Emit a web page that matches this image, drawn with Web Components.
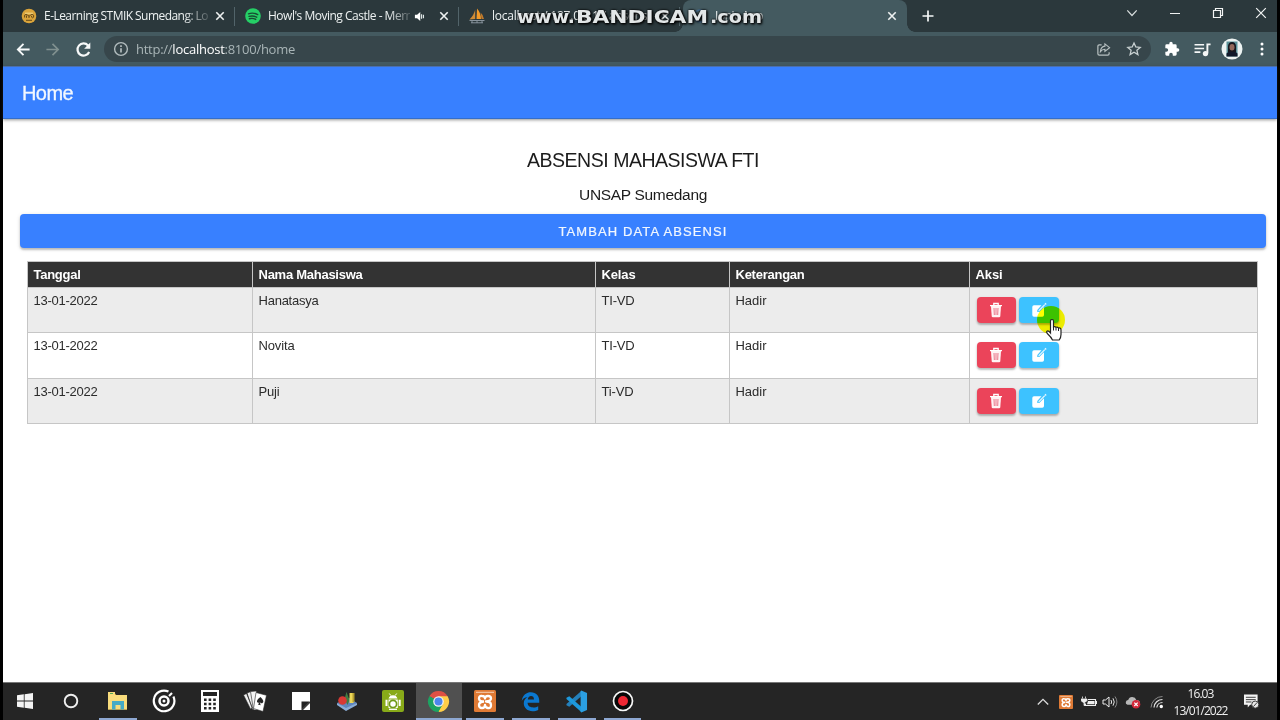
<!DOCTYPE html>
<html lang="id">
<head>
<meta charset="utf-8">
<title>Home</title>
<style>
html,body{margin:0;height:100%;background:#000;overflow:hidden}
</style>
</head>
<body>
<desk-screen></desk-screen>
<script>
const define = (name, css, html, ready) => customElements.define(name, class extends HTMLElement {
  connectedCallback() {
    if (this.shadowRoot) return;
    const root = this.attachShadow({ mode: 'open' });
    root.innerHTML = '<style>:host,*{box-sizing:border-box}' + css + '</style>' + (typeof html === 'function' ? html(this) : html);
    if (ready) ready(this, root);
  }
});

/* Glyph set: [viewBox, markup] */
const glyphs = {
  moodle: ['0 0 16 16', '<circle cx="8" cy="8" r="7.3" fill="#dba43a"/><path d="M3.6 9.5V7.2q1.5-1.8 3 0t3 0 3 0v2q-1 1.3-2 0V8M5.5 9.8V7.5M8 10V8M5 12.3h6" stroke="#65491a" stroke-width="1" fill="none"/><path d="M4 5.2h8" stroke="#f4d98a"/>'],
  spotify: ['0 0 16 16', '<circle cx="8" cy="8" r="7.8" fill="#25cf66"/><path d="M3.5 5.8c3-1 6.400-.7 9.200.8M4 8.400c2.600-.8 5.400-.5 7.700.8M4.400 10.700c2.200-.6 4.400-.4 6.300.7" stroke="#174d32" stroke-width="1.400" fill="none" stroke-linecap="round"/>'],
  pma: ['0 0 16 16', '<path d="M6.200 1.500v9.500L.5 11.500Q5 7 6.200 1.500" fill="#d08b35"/><path d="M8 .5Q12 5 12 11L7.500 11Z" fill="#f49a28"/><path d="M11.500 4.500Q14.500 7 15 11h-2.500Z" fill="#c07a2c"/><path d="M.5 12.500h15M2 14.800h12M3 12v3M8 12v3M13 12v3" stroke="#87929b" stroke-width="1"/>'],
  ionic: ['0 0 16 16', '<circle cx="8" cy="8" r="6" fill="none" stroke="#42698d" stroke-width="1.500"/><circle cx="8" cy="8" r="2.600" fill="#42698d"/>'],
  x: ['0 0 10 10', '<path d="M1.300 1.300l7.400 7.400M8.700 1.300L1.300 8.700" stroke="#eef1f1" stroke-width="1.600"/>'],
  sound: ['0 0 12 12', '<path d="M1 4.200h2.400L6.800 1v10L3.400 7.800H1z" fill="#fff"/><path d="M8.200 3.500v5M10.300 4v4" stroke="#dfe6e6" stroke-width="1.300"/>'],
  plus: ['0 0 12 12', '<path d="M6 .5v11M.5 6h11" stroke="#f5f7f7" stroke-width="1.700"/>'],
  chev: ['0 0 12 12', '<path d="M1.300 3.300L6 8.500l4.700-5.200" stroke="#d7dddd" stroke-width="1.200" fill="none"/>'],
  min: ['0 0 12 12', '<path d="M1 6.500h10" stroke="#eef1f1"/>'],
  restore: ['0 0 12 12', '<path d="M1.500 3.500h7v7h-7zM3.500 3V1.500h7v7H9" stroke="#f3f5f5" stroke-width="1.200" fill="none"/>'],
  close: ['0 0 12 12', '<path d="M1.200 1.200l9.600 9.600M10.800 1.200l-9.600 9.600" stroke="#f3f5f5" stroke-width="1.200"/>'],
  back: ['0 0 16 16', '<path d="M14.500 8H2.500M8 2L2 8l6 6" stroke="#f7f9f9" stroke-width="2" fill="none"/>'],
  fwd: ['0 0 16 16', '<path d="M1.500 8h12M8 2l6 6-6 6" stroke="#80908f" stroke-width="1.800" fill="none"/>'],
  reload: ['0 0 16 16', '<path d="M13.300 10.300A5.700 5.700 0 1 1 12.300 4.200" stroke="#f7f9f9" stroke-width="2.100" fill="none"/><path d="M14.400 1.300v6H8.600z" fill="#f7f9f9"/>'],
  info: ['0 0 16 16', '<circle cx="8" cy="8" r="6.400" stroke="#b2bcbe" stroke-width="1.400" fill="none"/><path d="M8 7.200v4.300M8 4.300v1.600" stroke="#c3cccd" stroke-width="1.500"/>'],
  share: ['0 0 16 16', '<path d="M6 3H3.500Q2 3 2 4.500v8Q2 14 3.500 14h9q1.500 0 1.500-1.500V11" stroke="#b7c0c1" stroke-width="1.300" fill="none"/><path d="M9.500 2l5 4-5 4V7.700Q6.500 7.700 4.700 10.200 5.200 4.900 9.500 4.400z" stroke="#b7c0c1" stroke-width="1.200" fill="none"/>'],
  star: ['0 0 16 16', '<path d="M8 2l1.800 4 4.400.4-3.300 2.900 1 4.300L8 11.300l-3.900 2.300 1-4.300L1.800 6.400 6.200 6z" stroke="#c8d0d1" stroke-width="1.300" fill="none"/>'],
  puzzle: ['0 0 24 24', '<path fill="#fff" d="M20.500 11H19V7a2 2 0 0 0-2-2h-4V3.500a2.500 2.500 0 0 0-5 0V5H4a2 2 0 0 0-2 2v3.800h1.500a2.700 2.700 0 0 1 0 5.400H2V20a2 2 0 0 0 2 2h3.800v-1.500a2.700 2.700 0 0 1 5.400 0V22H17a2 2 0 0 0 2-2v-4h1.500a2.500 2.500 0 0 0 0-5z"/>'],
  media: ['0 0 16 16', '<path d="M.5 3.500h9M.5 7h9M.5 10.500h5.500" stroke="#f5f7f7" stroke-width="1.500"/><path d="M12.600 11.500V3.200h3" stroke="#f5f7f7" stroke-width="1.800" fill="none"/><circle cx="10.800" cy="11.800" r="2.500" fill="#f5f7f7"/>'],
  avatar: ['0 0 22 22', '<circle cx="11" cy="11" r="10.500" fill="#edf3f2"/><path d="M5.500 3.500h11v15h-11z" fill="#5a9198"/><path d="M5.500 18.500v-3l3-2.500h5l3 2.500v3z" fill="#11182a"/><path d="M7 14V8q.5-4 4-4t4 4v6z" fill="#17171f"/><ellipse cx="11" cy="9.300" rx="2.500" ry="3.300" fill="#93685b"/>'],
  dots: ['0 0 4 14', '<circle cx="2" cy="2" r="1.500" fill="#fff"/><circle cx="2" cy="7" r="1.500" fill="#fff"/><circle cx="2" cy="12" r="1.500" fill="#fff"/>'],
  trash: ['0 0 16 16', '<path d="M2 3.700h12M5.800 3.500V1.500h4.400v2" stroke="#fff" stroke-width="1.300" fill="none"/><path d="M3 4h10l-.7 10.200q-.1 1.100-1.200 1.100H4.900q-1.100 0-1.200-1.100z" fill="#fff3f4"/><path d="M6 6l.3 7M8 6v7M10 6l-.3 7" stroke="#e7657b" stroke-width=".9"/>'],
  edit: ['0 0 16 16', '<path d="M3 3.300h7.500L6.300 8v2h2L13 5.200V13q0 1.700-1.700 1.700H3Q1.300 14.700 1.300 13V5Q1.300 3.300 3 3.300z" fill="#fff"/><path d="M7.300 9.400l.3-1.300 5.700-5.900 1 .9-5.800 5.900z" fill="#dff5ff"/><path d="M14 1.300l1.200 1.100" stroke="#e9f8ff" stroke-width="1.300"/>'],
  win: ['0 0 16 16', '<path d="M0 2.300l6.800-1v6.300H0zM7.600 1.200L16 0v7.600H7.600zM0 8.400h6.800v6.300L0 13.700zM7.600 8.400H16V16l-8.400-1.200z" fill="#f4f4f4"/>'],
  cortana: ['0 0 16 16', '<circle cx="8" cy="8" r="6.300" fill="none" stroke="#eee" stroke-width="1.900"/>'],
  folder: ['0 0 22 20', '<path d="M1 2.500h7l1.500 1.700H20v14.300H1z" fill="#d9a941"/><path d="M1 1h7v3h12v14.500H1z" fill="#f8dc7c"/><path d="M5 18.500V10h12v8.500h-3.500V14h-5v4.500z" fill="#45aac6"/><path d="M3 2.500h3" stroke="#55aa58"/>'],
  groove: ['0 0 24 24', '<path d="M16.500 2.600A10.300 10.300 0 1 0 21.400 7.500" fill="none" stroke="#fff" stroke-width="2.200"/><circle cx="12" cy="12" r="4.500" fill="none" stroke="#fff" stroke-width="2.500"/><circle cx="12" cy="12" r="1.500" fill="#fff"/><path d="M17 7l3-3" stroke="#fff" stroke-width="2.200"/>'],
  calc: ['0 0 18 22', '<path d="M0 0h18v22H0z" fill="#fff"/><path d="M2 2h14v4H2z" fill="#252525"/><path d="M3 9.700h12M3 14h12M3 18.300h12" stroke="#252525" stroke-width="2.400" stroke-dasharray="2.600 2"/>'],
  cards: ['0 0 24 22', '<path d="M.5 5l3-1.500 6 14.500-2 1zM4 3l4-1.500 4 17.500-2.500.5z" fill="#eee" stroke="#252525" stroke-width=".6"/><path d="M7.500 1.500l6-.5 1 19h-4z" fill="#f4f4f4" stroke="#252525" stroke-width=".6"/><path d="M13 2.500l10.500 2.800L20 21.500l-9.500-3z" fill="#fff" stroke="#252525" stroke-width=".6"/><path d="M17.500 7q4.500 4.500 2 6-1.500.6-2.500-.8l.6 3-2.700-.7 1.800-2.200q-2 1.300-2.700-.5-.4-2 3.500-4.800z" fill="#252525"/>'],
  note: ['0 0 18 18', '<path d="M0 0h18v9.500L9.500 18H0z" fill="#fff"/><path d="M9.500 18V9.500H18z" fill="#222"/><path d="M18 11v7h-7z" fill="#fff"/>'],
  chart: ['0 0 22 20', '<path d="M1 12l12-5 8 5-11 7z" fill="#5f86bd"/><path d="M1 12l9 5 11-5v2l-11 6-9-6z" fill="#8badd7"/><path d="M8.500 8l2-7 3 8-2 5z" fill="#407c42"/><circle cx="6.500" cy="9.500" r="4.300" fill="#d83934"/><path d="M13.500 2h4v10h-4z" fill="#ecd657"/><path d="M16.500 2h2v9h-2z" fill="#b29c30"/>'],
  android: ['0 0 22 22', '<rect width="22" height="22" rx="2" fill="#88aa19"/><path d="M6.500 8.500a4.700 4.700 0 0 1 9 0zM6.500 9.500h9.300V18H6.500zM3.500 9.800h2V16h-2zM16.700 9.800h2V16h-2z" fill="#fff"/><path d="M7.300 3.500l1.500 2M14.700 3.500l-1.500 2" stroke="#fff"/><circle cx="11" cy="14" r="3.600" fill="#fff" stroke="#6f9917" stroke-width="1.700"/><path d="M7 19.300h8" stroke="#fff" stroke-width="1.300"/>'],
  chrome: ['0 0 24 24', '<path d="M12 12L2.470 6.500A11 11 0 0 1 21.530 6.500z" fill="#dd5044"/><path d="M12 12L21.530 6.500A11 11 0 0 1 12 23z" fill="#ffce48"/><path d="M12 12v11A11 11 0 0 1 2.470 6.500z" fill="#1da362"/><path d="M12 6.500h9.530L16.800 14.800z" fill="#ffce48"/><path d="M2.470 6.500L7.200 14.800 12 12z" fill="#1da362"/><path d="M12 23l4.800-8.200L12 12 7.200 14.800z" fill="#1da362"/><path d="M12 23l4.800-8.200 2 1z" fill="#ffce48"/><circle cx="12" cy="12" r="5.500" fill="#f2f2f2"/><circle cx="12" cy="12" r="4.200" fill="#4c86ee"/>'],
  xampp: ['0 0 22 22', '<rect width="22" height="22" rx="1.500" fill="#df7a35"/><path d="M2 2.300h18" stroke="#f5d3b8"/><path d="M10 11.500Q5 11.500 5 8.500T8 6q3 0 3 2.500Q11 6 14 6t3 2.500-5 3q5 0 5 3.500t-3 3-3-3q0 3-3 3t-3-3 5-3.500" fill="none" stroke="#fff" stroke-width="2.300" stroke-linejoin="round"/>'],
  edge: ['0 0 24 24', '<path d="M2 11.300C3 4.500 7.500 1.500 12.500 1.500c6 0 9.500 4.500 9.500 9.500v2.500H8.700c0 4 3.300 5.300 6.500 5.300 2.300 0 4.200-.7 5.600-1.500v4.300c-1.700.9-4.200 1.400-6.500 1.400-5.600 0-10-3.600-10-9 0-3.500 2-5.800 4.500-7.100C5 7.400 3.200 9 2 11.300zM8.900 9.800H16c0-2.700-1.200-4-3.400-4-2 0-3.400 1.500-3.700 4z" fill="#0b78d0"/>'],
  vscode: ['0 0 24 24', '<path d="M17 1v5.500L4.500 17.500 1.500 16v-1.500z" fill="#2480bb"/><path d="M17 23v-5.500L4.500 6.500 1.500 8v1.500z" fill="#1d98db"/><path d="M17 .5l6 2.700v17.600l-6 2.700q-.7-.3-.7-1V1.500z" fill="#2b9fe2"/>'],
  rec: ['0 0 22 22', '<circle cx="11" cy="11" r="9.500" fill="#080808" stroke="#f8f8f8" stroke-width="1.700"/><circle cx="11" cy="11" r="5" fill="#ed2733"/>'],
  up: ['0 0 12 12', '<path d="M.8 8.500L6 3.300l5.200 5.200" stroke="#ddd" stroke-width="1.300" fill="none"/>'],
  battery: ['0 0 16 12', '<path d="M7 3.500h7.500v6H4.500V7.500" fill="none" stroke="#eee" stroke-width="1.100"/><path d="M7 5h6.500v3.200H6zM15 5h1v3h-1z" fill="#eee"/><path d="M1.500.5v2M4.500.5v2M0 3h6v1.500Q4.500 6.500 3 6.500T0 4.500zM3 6v3.500h2" fill="#eee" stroke="#eee" stroke-width=".8"/>'],
  vol: ['0 0 16 14', '<path d="M1 5h2.500L7 2v10L3.500 9H1z" fill="none" stroke="#eee"/><path d="M9 5q1.300 2 0 4M11 3.300q2.500 3.700 0 7.400" stroke="#e6e6e6" fill="none"/><path d="M13 1.500q3.800 5.500 0 11" stroke="#888" fill="none"/>'],
  cloud: ['0 0 16 14', '<path d="M2.500 9.800Q.3 9 .8 7t2.400-2Q4.200 1.800 7.300 2t4 3q3.500 0 3.500 2.500T12 9.800z" fill="#b8b8b8"/><circle cx="11" cy="9.300" r="4.300" fill="#d3283a"/><path d="M9.300 7.600l3.400 3.400M12.700 7.600L9.300 11" stroke="#fff" stroke-width="1.200"/>'],
  wifi: ['0 0 14 14', '<path d="M1 12.500A11.500 11.500 0 0 1 12.500 1.500" stroke="#8a8a8a" fill="none"/><path d="M4 12.500A8.500 8.500 0 0 1 12.500 4.500M6.800 12.500a5.700 5.700 0 0 1 5.700-5" stroke="#e2e2e2" stroke-width="1.200" fill="none"/><circle cx="11.300" cy="11.500" r="1.700" fill="#fff"/>'],
  notif: ['0 0 18 16', '<path d="M1 .5h14.500v11H7.500L5 14.500v-3H1z" fill="#f3f3f3"/><path d="M3 3.500h10.500M3 6h10.500M3 8.500h6" stroke="#333"/><circle cx="13" cy="11.300" r="3.800" fill="#e8e8e8" stroke="#333"/><path d="M11 13.500l4-4.500" stroke="#333"/>'],
  hand: ['0 0 18 24', '<path d="M5.500 15V3.200Q5.500 1.500 7 1.500t1.500 1.700V9q1.400-.8 2.500.3 1.500-.7 2.500.7 2.500-.5 2.500 2v4.500q0 3-1.800 5.500H7.500Q6 19 3 16.300 1 14.300 2 13.200q1.300-1 3.500 1.800z" fill="#fff" stroke="#222" stroke-width="1.200"/><path d="M8.500 8.500v4M11 9.500v3M13.500 10v3" stroke="#222" stroke-width="1"/>'],
};
define('ui-icon', ':host{display:block;flex:none}svg{display:block;width:100%;height:100%}', el => {
  const [box, body] = glyphs[el.getAttribute('name')];
  const [w, h] = (el.getAttribute('size') || '16').split('x');
  el.style.width = w + 'px';
  el.style.height = (h || w) + 'px';
  return `<svg viewBox="${box}">${body}</svg>`;
});

/* One line of text tracked to an exact measure */
define('ui-text', ':host{display:inline-block;white-space:pre;flex:none}span{display:inline-block}', '<span><slot></slot></span>', (el, root) => {
  const target = +el.getAttribute('w'), span = root.querySelector('span');
  if (!target) return;
  el.style.width = target + 'px';
  requestAnimationFrame(() => {
    const nodes = root.querySelector('slot').assignedNodes({ flatten: true });
    const n = nodes.reduce((sum, node) => sum + node.textContent.length, 0);
    if (n) span.style.letterSpacing = (target - span.getBoundingClientRect().width) / n + 'px';
  });
});

define('browser-tab', `
:host{display:flex;align-items:center;height:32px;flex:none;position:relative}
.t{overflow:hidden;height:20px;line-height:20px;margin-left:7px;flex:none}
.fade{-webkit-mask-image:linear-gradient(90deg,#000 85%,#0003)}
.sp{flex:1}.line{width:1px;height:19px;background:#52646a;margin-left:9px}
:host([active]){background:#445a60;border-radius:8px 8px 0 0}
:host([active])::after{content:"";position:absolute;left:100%;bottom:0;width:8px;height:8px;background:radial-gradient(circle at 100% 0,transparent 7.500px,#445a60 8px)}
:host([active])::before{content:"";position:absolute;right:100%;bottom:0;width:8px;height:8px;background:radial-gradient(circle at 0 0,transparent 7.500px,#445a60 8px)}
:host([active]) .line{display:none}`,
el => `<ui-icon name="${el.getAttribute('icon')}" size="16"></ui-icon><div class="t ${el.hasAttribute('fade') ? 'fade' : ''}"><ui-text w="${el.getAttribute('w')}"><slot></slot></ui-text></div><span class="sp"></span><slot name="extra"></slot><ui-icon name="x" size="10"></ui-icon><span class="line"></span>`);

define('tab-strip', `
:host{display:flex;height:32px;background:#2b383c;color:#eef2f2;font:12px "Open Sans","Noto Sans",sans-serif;position:relative}
browser-tab:nth-of-type(1){width:232px;padding-left:18px}
browser-tab:nth-of-type(2){width:224px;padding-left:10px}
browser-tab:nth-of-type(3){width:221px;padding-left:10px}
browser-tab:nth-of-type(4){width:224px;padding:0 10px 0 9px;margin-left:3px}
.extra{margin-right:14px}
.new{margin:10px 0 0 15px}
.wc{margin-left:auto;display:flex;gap:31px;padding:7px 10px 0 0}
.mark{position:absolute;left:510px;top:0;width:256px;height:32px;filter:drop-shadow(0 0 1px #000) drop-shadow(1px 1px 1px #000)}`,
`<browser-tab icon="moodle" w="164" fade>E-Learning STMIK Sumedang: Lo</browser-tab>
<browser-tab icon="spotify" w="142" fade>Howl's Moving Castle - Merr<ui-icon class="extra" slot="extra" name="sound" size="11"></ui-icon></browser-tab>
<browser-tab icon="pma" w="158">localhost / 127.0.0.1 / absensi</browser-tab>
<browser-tab icon="ionic" w="48" active>Ionic App</browser-tab>
<ui-icon class="new" name="plus" size="12"></ui-icon>
<div class="wc"><ui-icon name="chev" size="12"></ui-icon><ui-icon name="min" size="12"></ui-icon><ui-icon name="restore" size="12"></ui-icon><ui-icon name="close" size="12"></ui-icon></div>
<svg class="mark" viewBox="0 0 256 32" fill="#e2e6e7" font-family="DejaVu Sans" font-weight="bold"><text x="4" y="22.500" font-size="18" textLength="58" lengthAdjust="spacingAndGlyphs">www.</text><text x="63" y="22.500" font-size="18.500" textLength="132" lengthAdjust="spacingAndGlyphs">BANDICAM</text><text x="197" y="22.500" font-size="17" textLength="52" lengthAdjust="spacingAndGlyphs">.com</text></svg>`);

define('address-bar', `
:host{display:flex;align-items:center;height:34px;background:#445a60;padding:0 13px 0 13px;font:13px "Open Sans","Noto Sans",sans-serif}
.box{display:flex;align-items:center;width:1047px;height:26px;border-radius:13px;background:#37464b;margin-left:12px;padding:0 9px;color:#a9b5b7}
ui-text{margin-left:7px}b{font-weight:400;color:#fff}
.fw{margin:0 15px 0 14px}.sh{margin:0 15px 0 auto}`,
`<ui-icon name="back" size="15"></ui-icon><ui-icon class="fw" name="fwd" size="15"></ui-icon><ui-icon name="reload" size="17"></ui-icon>
<div class="box"><ui-icon name="info" size="16"></ui-icon><ui-text w="159">http://<b>localhost</b>:8100/home</ui-text><ui-icon class="sh" name="share" size="15"></ui-icon><ui-icon name="star" size="16"></ui-icon></div>
<ui-icon style="margin-left:13px" name="puzzle" size="16"></ui-icon><ui-icon style="margin-left:14px" name="media" size="17"></ui-icon><ui-icon style="margin-left:10px" name="avatar" size="22"></ui-icon><ui-icon style="margin-left:auto" name="dots" size="4x14"></ui-icon>`);

define('app-header', `
:host{display:flex;align-items:center;height:53px;background:#3880ff;border-top:1px solid #4a6fae;border-bottom:1px solid #356ec9;box-shadow:0 1px 3px #3338;color:#f2f7ff;font:500 20px "Liberation Sans",Arial,sans-serif;-webkit-text-stroke:.3px #f2f7ff;padding:1px 19px 0;position:relative}`,
`<ui-text w="51"><slot></slot></ui-text>`);

define('wide-button', `
:host{display:flex;align-items:center;justify-content:center;height:34px;border-radius:4px;background:#3880ff;color:#f2f7ff;font:13px "Liberation Sans",Arial,sans-serif;-webkit-text-stroke:.2px #f2f7ff;box-shadow:0 2px 2px #0003,0 1px 4px #0002}`,
`<ui-text w="169"><slot></slot></ui-text>`);

define('icon-button', `
:host{display:flex;align-items:center;justify-content:center;width:39.500px;height:26px;border-radius:4px;background:var(--tone);box-shadow:0 2px 2px #0003,0 1px 3px #0002}`,
el => `<ui-icon name="${el.getAttribute('icon')}" size="16"></ui-icon>`);

define('data-row', `
:host{display:grid;grid-template-columns:225px 343px 134px 240px 289px;color:#2c2c2c;background:var(--row,#fff)}
div{border-left:1px solid #c6c6c6;border-top:1px solid #c6c6c6;padding:5px 0 0 6px;line-height:15px}
div:last-child{border-right:1px solid #c6c6c6}
:host([head]){background:#333;color:#fff;font-weight:700}
.act{display:flex;gap:3px;padding:9px 0 0 7px}`,
el => {
  const widths = (el.getAttribute('widths') || '').split(',');
  const cells = el.getAttribute('cells').split('|').map((c, i) => `<div><ui-text w="${widths[i]}">${c}</ui-text></div>`).join('');
  return cells + (el.hasAttribute('head') ? '' : '<div class="act"><icon-button icon="trash" style="--tone:#eb445a"></icon-button><icon-button icon="edit" style="--tone:#3dc2ff"></icon-button></div>');
});

define('attendance-table', `
:host{display:grid;grid-template-rows:26px 45px 46px 45px;width:1231px;border-bottom:1px solid #c6c6c6;font:13px "Liberation Sans",Arial,sans-serif}
.odd{--row:#ececec}`,
`<data-row head cells="Tanggal|Nama Mahasiswa|Kelas|Keterangan|Aksi" widths="47,104,34,69,27"></data-row>
<data-row class="odd" cells="13-01-2022|Hanatasya|TI-VD|Hadir" widths="64,60,33,31"></data-row>
<data-row cells="13-01-2022|Novita|TI-VD|Hadir" widths="64,36,33,31"></data-row>
<data-row class="odd" cells="13-01-2022|Puji|Ti-VD|Hadir" widths="64,21,32,31"></data-row>`);

define('app-page', `
:host{display:flex;flex-direction:column;flex:1;background:#fff;color:#1c1c1c;font-family:"Liberation Sans",Arial,sans-serif}
main{display:flex;flex-direction:column;align-items:center;padding-left:6px}
.h{font-size:19.500px;line-height:24px;margin-top:29px}
.s{font-size:15.500px;line-height:20px;margin-top:13px}
wide-button{width:1246px;margin:9px 0 13px}
attendance-table{margin-right:2px}`,
`<app-header>Home</app-header><main><ui-text class="h" w="232">ABSENSI MAHASISWA FTI</ui-text><ui-text class="s" w="128">UNSAP Sumedang</ui-text><wide-button>TAMBAH DATA ABSENSI</wide-button><attendance-table></attendance-table></main>`);

define('task-item', `
:host{display:flex;align-items:center;justify-content:center;width:45.900px;height:100%;border-bottom:2px solid transparent;padding-top:1px;position:relative}
:host([active]){background:#505050}
i{position:absolute;left:4px;right:4px;bottom:-2px;height:2px;background:#8ea8d2;display:none}
:host([open]) i{display:block}:host([active]) i{left:0;right:0}`,
el => `<ui-icon name="${el.getAttribute('icon')}" size="${el.getAttribute('size')}"></ui-icon><i></i>`);

define('task-bar', `
:host{display:flex;height:38px;background:#252525;border-top:1px solid #777;color:#f0f0f0;font:12px/17px "Open Sans","Noto Sans",sans-serif}
.apps{display:flex;margin-left:-1px}
task-item:nth-child(3){margin-left:1px}
.tray{display:flex;align-items:center;margin-left:auto;padding-right:17px}
.clock{display:flex;flex-direction:column;align-items:center;width:55px;margin:0 15px 0 9px}`,
el => '<div class="apps">' + [['win','16'],['cortana','16'],['folder','22x20','open'],['groove','24'],['calc','18x22'],['cards','24x22'],['note','18'],['chart','22x20'],['android','22'],['chrome','23','open active'],['xampp','22','open'],['edge','21','open'],['vscode','23','open'],['rec','22','open']]
  .map(([n, s, a = '']) => `<task-item icon="${n}" size="${s}" ${a}></task-item>`).join('') +
  `</div><div class="tray"><ui-icon name="up" size="12"></ui-icon><ui-icon style="margin-left:10px" name="xampp" size="14"></ui-icon><ui-icon style="margin-left:8px" name="battery" size="16x12"></ui-icon><ui-icon style="margin-left:5px" name="vol" size="16x14"></ui-icon><ui-icon style="margin-left:7px" name="cloud" size="16x14"></ui-icon><ui-icon style="margin-left:9px" name="wifi" size="14"></ui-icon><div class="clock"><ui-text w="26">16.03</ui-text><ui-text w="54">13/01/2022</ui-text></div><ui-icon name="notif" size="17x15"></ui-icon></div>`);

define('mouse-pointer', `
:host{position:absolute;left:1037px;top:306px;width:28px;height:36px}
.halo{width:28px;height:28px;border-radius:50%;background:#ff0;mix-blend-mode:multiply}
ui-icon{position:absolute;left:8px;top:12px}`,
`<div class="halo"></div><ui-icon name="hand" size="18x24"></ui-icon>`);

define('desk-screen', `
:host{display:flex;flex-direction:column;width:1280px;height:720px;padding:0 3px;background:#000;overflow:hidden;position:relative}`,
`<tab-strip></tab-strip><address-bar></address-bar><app-page></app-page><task-bar></task-bar><mouse-pointer></mouse-pointer>`);
</script>
</body>
</html>
